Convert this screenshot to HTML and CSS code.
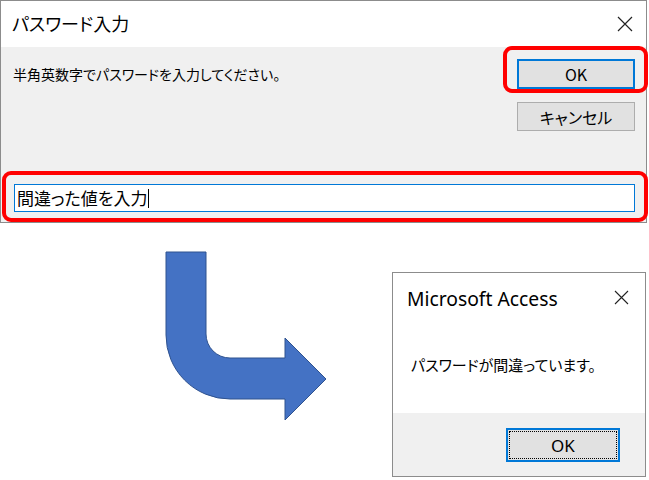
FILE: index.html
```html
<!DOCTYPE html>
<html lang="ja">
<head>
    <meta charset="UTF-8">
    <title>パスワード入力</title>
    <link rel="stylesheet" href="styles.css">
</head>
<body>
    <div class="prompt-dialog">
        <div class="title-bar">
            <span class="title">パスワード入力</span>
            <svg class="close" width="16" height="16" viewBox="0 0 16 16"><path d="M1 1 L15 15 M15 1 L1 15" stroke="#222" stroke-width="1.2" fill="none"/></svg>
        </div>
        <div class="prompt-body">
            <div class="prompt-top">
                <p class="message">半角英数字でパスワードを入力してください。</p>
                <div class="buttons">
                    <button class="btn btn-default">OK</button>
                    <button class="btn">キャンセル</button>
                </div>
            </div>
            <div class="field">間違った値を入力<span class="caret"></span></div>
            <div class="mark mark-ok"></div>
            <div class="mark mark-field"></div>
        </div>
    </div>

    <div class="lower">
        <svg class="turn-arrow" width="170" height="176" viewBox="160 248 170 176">
            <path d="M166 252 H206 V334 A24 24 0 0 0 230 358 H285 V338 L326 379 L285 420 V399 H230 A64 64 0 0 1 166 335 Z" fill="#4472c4" stroke="#2f528f" stroke-width="1"/>
        </svg>

        <div class="msg-dialog">
            <div class="msg-title">
                <span class="app-name">Microsoft Access</span>
                <svg class="close" width="15" height="15" viewBox="0 0 15 15"><path d="M1 1 L14 14 M14 1 L1 14" stroke="#222" stroke-width="1.1" fill="none"/></svg>
            </div>
            <p class="msg-text">パスワードが間違っています。</p>
            <div class="msg-footer">
                <button class="btn btn-focus">OK</button>
            </div>
        </div>
    </div>
</body>
</html>
```

FILE: styles.css
```css
body {
    margin: 0;
    background: #fff;
    font-family: "Noto Sans CJK JP", "Noto Sans", sans-serif;
    font-feature-settings: "palt";
    color: #000;
}

/* input box dialog */
.prompt-dialog {
    width: 647px;
    height: 223px;
    box-sizing: border-box;
    border: 1px solid #8c8c8c;
    display: flex;
    flex-direction: column;
}
.title-bar {
    height: 46px;
    background: #fff;
    display: flex;
    align-items: center;
    justify-content: space-between;
    padding: 0 13px 0 11px;
}
.title {
    font-size: 18px;
    margin-top: -2px;
}
.close {
    display: block;
}
.prompt-body {
    flex: 1;
    background: #f0f0f0;
    position: relative;
    padding: 12px 11px 0 12px;
}
.prompt-top {
    display: flex;
    justify-content: space-between;
}
.message {
    margin: 5px 0 0 0;
    font-size: 14px;
}
.buttons {
    display: flex;
    flex-direction: column;
    gap: 13px;
}
.btn {
    font-family: "Noto Sans CJK JP", "Noto Sans", sans-serif;
    font-feature-settings: "palt";
    font-size: 16px;
    color: #000;
    background: #e1e1e1;
    border: 1px solid #adadad;
    width: 118px;
    height: 29px;
    padding: 0;
    line-height: 1;
}
.btn-default {
    border: 2px solid #0078d7;
    height: 30px;
}
.field {
    margin: 53px 0 0 1px;
    height: 28px;
    box-sizing: border-box;
    background: #fff;
    border: 1px solid #0078d7;
    font-size: 17px;
    line-height: 26px;
    padding-left: 2px;
    display: flex;
    align-items: center;
}
.caret {
    display: inline-block;
    width: 1px;
    height: 19px;
    background: #000;
    margin-left: 1px;
}

/* red call-outs drawn over the dialog */
.mark {
    position: absolute;
    border: 4px solid #ff0000;
    border-radius: 9px;
    box-sizing: border-box;
}
.mark-ok {
    left: 502px;
    top: -1px;
    width: 145px;
    height: 47px;
}
.mark-field {
    left: 1px;
    top: 124px;
    width: 646px;
    height: 51px;
}

.lower {
    display: flex;
    align-items: flex-start;
}
.turn-arrow {
    margin: 25px 0 0 160px;
    display: block;
}

/* error message box */
.msg-dialog {
    margin: 49px 0 0 62px;
    width: 254px;
    height: 205px;
    box-sizing: border-box;
    border: 1px solid #8c8c8c;
    background: #fff;
    display: flex;
    flex-direction: column;
}
.msg-title {
    height: 48px;
    display: flex;
    align-items: center;
    justify-content: space-between;
    padding: 0 16px 0 14px;
}
.app-name {
    font-family: "Noto Sans", sans-serif;
    font-size: 19.3px;
    margin-top: 2px;
}
.msg-text {
    margin: 33px 0 0 18px;
    font-size: 15px;
    height: 59px;
}
.msg-footer {
    flex: 1;
    background: #f0f0f0;
    display: flex;
    justify-content: flex-end;
    align-items: flex-start;
    padding: 15px 25px 0 0;
}
.btn-focus {
    width: 114px;
    height: 34px;
    border: 2px solid #0078d7;
    font-family: "Noto Sans", sans-serif;
    font-size: 17px;
    outline: 1px dotted #000;
    outline-offset: -4px;
}
```
